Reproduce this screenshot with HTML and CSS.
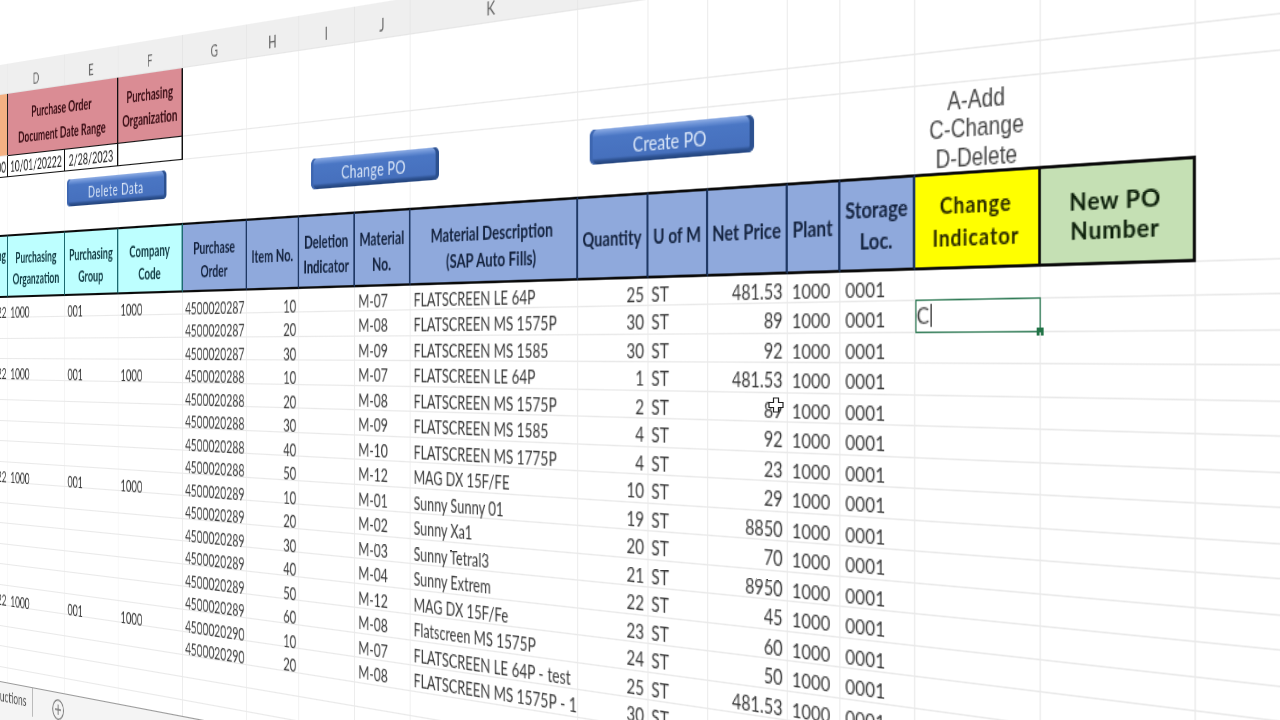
FILE: index.html
```html
<!DOCTYPE html>
<html lang="en">
<head>
<meta charset="utf-8">
<title>PO sheet</title>
<link rel="stylesheet" href="styles.css">
</head>
<body>
<main class="sheet">
  <div class="ribbon"></div>
  <div class="row letters"><span></span><span>D</span><span>E</span><span>F</span><span>G</span><span>H</span><span>I</span><span>J</span><span>K</span><span></span><span></span><span></span><span></span><span></span><span></span><span></span><span></span></div>
  <div class="row filters">
    <span class="orange"></span><span class="pink wide">Purchase Order<br>Document Date Range</span><span class="pink">Purchasing<br>Organization</span><span></span><span></span><span></span><span></span><span></span><span></span><span></span><span></span><span></span><span></span><span></span><span></span><span></span>
  </div>
  <div class="row dates">
    <span class="date end">00</span><span class="date">10/01/20222</span><span class="date">2/28/2023</span><span class="date"></span><span></span><span></span><span></span><span></span><span></span><span></span><span></span><span></span><span></span><span></span><span></span><span></span><span></span>
  </div>
  <div class="row gap">
    <span></span><span></span><span></span><span></span><span></span><span></span><span></span><span></span><span></span><span></span><span></span><span></span><span></span><span></span>
    <span class="legend">A-Add<br>C-Change<br>D-Delete</span><span></span><span></span>
    <button class="btn btn-delete">Delete Data</button>
    <button class="btn btn-change">Change PO</button>
    <button class="btn btn-create">Create PO</button>
  </div>
  <div class="row head">
    <span class="cyan end">Purchasing<br>&nbsp;</span><span class="cyan">Purchasing<br>Organzation</span><span class="cyan">Purchasing<br>Group</span><span class="cyan">Company<br>Code</span>
    <span class="blue">Purchase<br>Order</span><span class="blue">Item No.</span><span class="blue">Deletion<br>Indicator</span><span class="blue">Material<br>No.</span><span class="blue">Material Description<br>(SAP Auto Fills)</span><span class="blue">Quantity</span><span class="blue">U of M</span><span class="blue">Net Price</span><span class="blue">Plant</span><span class="blue">Storage<br>Loc.</span>
    <span class="yellow">Change<br>Indicator</span><span class="green">New PO<br>Number</span><span class="none"></span>
  </div>
  <div class="row data"><span>22</span><span>1000</span><span>001</span><span>1000</span><span>4500020287</span><span>10</span><span></span><span>M-07</span><span>FLATSCREEN LE 64P</span><span>25</span><span>ST</span><span>481.53</span><span>1000</span><span>0001</span><span></span><span></span><span></span></div>
  <div class="row data"><span></span><span></span><span></span><span></span><span>4500020287</span><span>20</span><span></span><span>M-08</span><span>FLATSCREEN MS 1575P</span><span>30</span><span>ST</span><span>89</span><span>1000</span><span>0001</span><span class="active">C<b class="caret"></b><b class="handle"></b></span><span></span><span></span></div>
  <div class="row data"><span></span><span></span><span></span><span></span><span>4500020287</span><span>30</span><span></span><span>M-09</span><span>FLATSCREEN MS 1585</span><span>30</span><span>ST</span><span>92</span><span>1000</span><span>0001</span><span></span><span></span><span></span></div>
  <div class="row data"><span>22</span><span>1000</span><span>001</span><span>1000</span><span>4500020288</span><span>10</span><span></span><span>M-07</span><span>FLATSCREEN LE 64P</span><span>1</span><span>ST</span><span>481.53</span><span>1000</span><span>0001</span><span></span><span></span><span></span></div>
  <div class="row data"><span></span><span></span><span></span><span></span><span>4500020288</span><span>20</span><span></span><span>M-08</span><span>FLATSCREEN MS 1575P</span><span>2</span><span>ST</span><span>89</span><span>1000</span><span>0001</span><span></span><span></span><span></span></div>
  <div class="row data"><span></span><span></span><span></span><span></span><span>4500020288</span><span>30</span><span></span><span>M-09</span><span>FLATSCREEN MS 1585</span><span>4</span><span>ST</span><span>92</span><span>1000</span><span>0001</span><span></span><span></span><span></span></div>
  <div class="row data"><span></span><span></span><span></span><span></span><span>4500020288</span><span>40</span><span></span><span>M-10</span><span>FLATSCREEN MS 1775P</span><span>4</span><span>ST</span><span>23</span><span>1000</span><span>0001</span><span></span><span></span><span></span></div>
  <div class="row data"><span></span><span></span><span></span><span></span><span>4500020288</span><span>50</span><span></span><span>M-12</span><span>MAG DX 15F/FE</span><span>10</span><span>ST</span><span>29</span><span>1000</span><span>0001</span><span></span><span></span><span></span></div>
  <div class="row data"><span>22</span><span>1000</span><span>001</span><span>1000</span><span>4500020289</span><span>10</span><span></span><span>M-01</span><span>Sunny Sunny 01</span><span>19</span><span>ST</span><span>8850</span><span>1000</span><span>0001</span><span></span><span></span><span></span></div>
  <div class="row data"><span></span><span></span><span></span><span></span><span>4500020289</span><span>20</span><span></span><span>M-02</span><span>Sunny Xa1</span><span>20</span><span>ST</span><span>70</span><span>1000</span><span>0001</span><span></span><span></span><span></span></div>
  <div class="row data"><span></span><span></span><span></span><span></span><span>4500020289</span><span>30</span><span></span><span>M-03</span><span>Sunny Tetral3</span><span>21</span><span>ST</span><span>8950</span><span>1000</span><span>0001</span><span></span><span></span><span></span></div>
  <div class="row data"><span></span><span></span><span></span><span></span><span>4500020289</span><span>40</span><span></span><span>M-04</span><span>Sunny Extrem</span><span>22</span><span>ST</span><span>45</span><span>1000</span><span>0001</span><span></span><span></span><span></span></div>
  <div class="row data"><span></span><span></span><span></span><span></span><span>4500020289</span><span>50</span><span></span><span>M-12</span><span>MAG DX 15F/Fe</span><span>23</span><span>ST</span><span>60</span><span>1000</span><span>0001</span><span></span><span></span><span></span></div>
  <div class="row data"><span></span><span></span><span></span><span></span><span>4500020289</span><span>60</span><span></span><span>M-08</span><span>Flatscreen MS 1575P</span><span>24</span><span>ST</span><span>50</span><span>1000</span><span>0001</span><span></span><span></span><span></span></div>
  <div class="row data"><span>22</span><span>1000</span><span>001</span><span>1000</span><span>4500020290</span><span>10</span><span></span><span>M-07</span><span>FLATSCREEN LE 64P - test</span><span>25</span><span>ST</span><span>481.53</span><span>1000</span><span>0001</span><span></span><span></span><span></span></div>
  <div class="row data"><span></span><span></span><span></span><span></span><span>4500020290</span><span>20</span><span></span><span>M-08</span><span>FLATSCREEN MS 1575P - 1</span><span>30</span><span>ST</span><span>89</span><span>1000</span><span>0001</span><span></span><span></span><span></span></div>
  <div class="row data"><span></span><span></span><span></span><span></span><span></span><span></span><span></span><span></span><span></span><span></span><span></span><span></span><span></span><span></span><span></span><span></span><span></span></div>
  <div class="row data"><span></span><span></span><span></span><span></span><span></span><span></span><span></span><span></span><span></span><span></span><span></span><span></span><span></span><span></span><span></span><span></span><span></span></div>
  <div class="row data"><span></span><span></span><span></span><span></span><span></span><span></span><span></span><span></span><span></span><span></span><span></span><span></span><span></span><span></span><span></span><span></span><span></span></div>
  <div class="tabs">
    <span class="tab">Instructions</span>
    <svg class="add" viewBox="0 0 20 20" aria-hidden="true"><circle cx="10" cy="10" r="8.5"/><path d="M10 5.5v9M5.500 10h9"/></svg>
  </div>
</main>
<svg class="cursor" viewBox="0 0 16 16" aria-hidden="true"><path d="M5.500 1h5v4.500H15v5h-4.500V15h-5v-4.500H1v-5h4.500z"/></svg>
</body>
</html>
```
FILE: styles.css
```css
* { box-sizing: border-box; }
html, body {
  margin: 0;
  width: 1280px;
  height: 720px;
  overflow: hidden;
  background: #fff;
}
.sheet {
  --cols: 75px 101.2px 88.4px 101.8px 93.8px 71.8px 73.3px 68.500px 188.300px 70.700px 57.400px 71.400px 45.500px 61px 94.700px 106px 160px;
  width: 1420px;
  height: 760px;
  margin-left: -60px;
  display: flex;
  flex-direction: column;
  font: 15px/20.5px Lato, "Open Sans", sans-serif;
  color: #3c3c3c;
  transform-origin: 60px 350px;
  transform: matrix3d(0.5405,0,0,-0.000312, 0,1,0,0, 0,0,1,0, 0,0,0,1);
}
.ribbon { height: 65px; flex: none; }
.row {
  position: relative;
  flex: none;
  display: grid;
  grid-template-columns: var(--cols);
  grid-template-rows: minmax(0, 1fr);
}
.row > span {
  min-width: 0;
  white-space: nowrap;
  border-right: 1.500px solid #ececec;
  border-bottom: 1px solid #e9e9e9;
}
.letters { height: 29.500px; background: #efefef; color: #666; }
.letters > span {
  text-align: center;
  line-height: 37px;
  border-color: #e6e6e6;
}
.filters { height: 62px; }
.filters > span { display: flex; align-items: center; justify-content: center; text-align: center; }
.pink {
  background: #da8c94;
  color: #3a0d14;
  font-weight: 700;
  line-height: 22px;
  border-right: 2.500px solid #111 !important;
  border-bottom: 1.500px solid #111 !important;
}
.wide { grid-column: span 2; line-height: 24px; padding-top: 3px; }
.orange { background: #f4b183; border-right: 2.500px solid #222 !important; }
.dates { height: 21px; }
.date {
  padding: 0 3px;
  text-align: center;
  color: #222;
  border-right: 2.500px solid #111 !important;
  border-bottom: 1.500px solid #111 !important;
}
.dates .end { text-align: right; padding-right: 2px; }
.gap { height: 57px; }
.gap > span { border-bottom: 0; }
.legend {
  padding-top: 3px;
  text-align: center;
  font: 15.700px/18.500px "Liberation Sans", Arial, sans-serif;
  color: #444;
}
.btn {
  position: absolute;
  top: 8.500px;
  width: 160px;
  height: 26px;
  padding: 0;
  border: 0;
  border-radius: 5px;
  background: linear-gradient(#8fade4 0, #6f95d8 9%, #4a76c4 22%, #4670bd 82%, #2a4e8c 92%, #24447c 100%);
  box-shadow: inset 3px 0 0 #3d66b0, inset -4px 0 0 #2c5190;
  color: #d9e5f7;
  font: 15.500px Lato, "Open Sans", sans-serif;
}
.btn-delete { left: 179px; width: 162px; letter-spacing: .8px; }
.btn-change { left: 548px; top: 10px; letter-spacing: .4px; }
.btn-create { left: 874px; width: 158px; }
.head { height: 63px; }
.head > span {
  display: flex;
  align-items: center;
  justify-content: center;
  padding-top: 5px;
  text-align: center;
  font-weight: 700;
  line-height: 21px;
  border-top: 2px solid #0b0b0b;
  border-bottom: 2px solid #0b0b0b;
}
.head > span:nth-child(n+10) { padding-top: 3px; }
.head > span:nth-child(n+12) { padding-top: 2px; }
.head .end { justify-content: flex-end; padding-right: 2px; padding-top: 0; }
.cyan { background: #bdffff; color: #123c44; border-right: 2px solid #1c6a70 !important; }
.blue { background: #8fa9dc; color: #14233f; border-right: 2px solid #1f3864 !important; }
.yellow { background: #ffff00; color: #2a2a00; border-right: 2.500px solid #0b0b0b !important; letter-spacing: .7px; }
.head .green { background: #c5e0b4; color: #0c1f0a; border-right: 2.500px solid #0b0b0b !important; letter-spacing: .5px; font-size: 16px; line-height: 18px; padding-top: 0; }
.head > .none { border-top: 0; border-bottom: 1px solid #e9e9e9; border-right: 1.500px solid #ececec; }
.data { height: 20.500px; }
.data > span { padding: 2px 3px 0; line-height: 19px; }
.data > :nth-child(-n+6) { padding-top: 5px; }
.data > :nth-child(2),
.data > :nth-child(3),
.data > :nth-child(4),
.data > :nth-child(8),
.data > :nth-child(9) { padding-left: 4px; }
.data > :nth-child(1) { text-align: right; padding-right: 2px; }
.data > :nth-child(6),
.data > :nth-child(10),
.data > :nth-child(12) { text-align: right; }
.data > :nth-child(9) { font-size: 14.800px; }
.data > :nth-child(n+13) { font-size: 14.200px; padding-left: 4px; }
.data > :nth-child(12) { font-size: 14.500px; }
.data > .active {
  position: relative;
  margin-top: -1px;
  padding: 0;
  border: 1.500px solid #2f7a55;
  color: #444;
  font-size: 15px;
}
.caret {
  display: inline-block;
  width: 1px;
  height: 15px;
  margin-left: 1px;
  vertical-align: -2px;
  background: #222;
}
.handle {
  position: absolute;
  right: -3px;
  bottom: -3px;
  width: 5px;
  height: 5px;
  background: #217346;
}
.tabs {
  position: relative;
  margin-top: -6.500px;
  flex: 1;
  display: flex;
  align-items: flex-start;
  gap: 33px;
  background: #f4f4f4;
  border-top: 1px solid #9a9a9a;
  color: #555;
}
.tab {
  width: 120px;
  padding: 3px 10px 0 0;
  text-align: right;
  border-right: 2px solid #bbb;
  height: 28px;
}
.add { width: 22px; height: 22px; margin-top: 5px; fill: none; stroke: #777; stroke-width: 1.300; }
.cursor {
  position: absolute;
  left: 768px;
  top: 397px;
  width: 16px;
  height: 16px;
  fill: #fff;
  stroke: #222;
  stroke-width: 1.200;
}
```
